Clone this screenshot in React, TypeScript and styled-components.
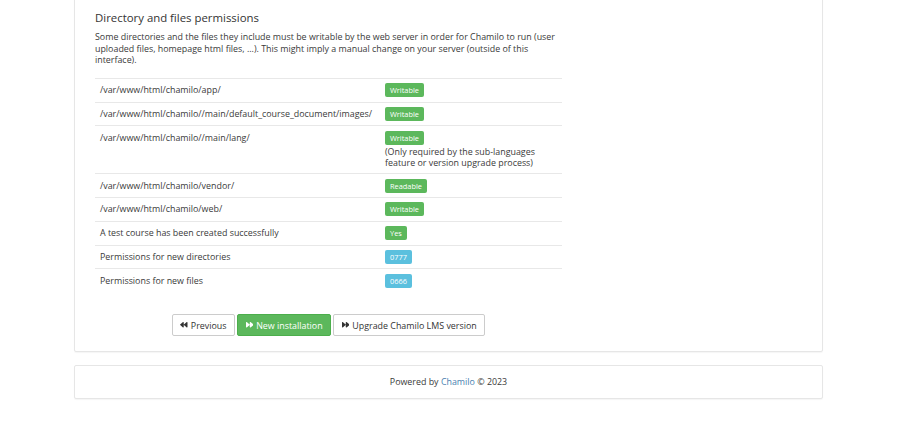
import styled, { createGlobalStyle } from 'styled-components';
import { FaBackward, FaForward } from 'react-icons/fa';

type Status = 'success' | 'info';

interface PermissionRow {
  label: string;
  value: string;
  status: Status;
  note?: string;
}

const rows: PermissionRow[] = [
  { label: '/var/www/html/chamilo/app/', value: 'Writable', status: 'success' },
  {
    label: '/var/www/html/chamilo//main/default_course_document/images/',
    value: 'Writable',
    status: 'success',
  },
  {
    label: '/var/www/html/chamilo//main/lang/',
    value: 'Writable',
    status: 'success',
    note: '(Only required by the sub-languages feature or version upgrade process)',
  },
  { label: '/var/www/html/chamilo/vendor/', value: 'Readable', status: 'success' },
  { label: '/var/www/html/chamilo/web/', value: 'Writable', status: 'success' },
  { label: 'A test course has been created successfully', value: 'Yes', status: 'success' },
  { label: 'Permissions for new directories', value: '0777', status: 'info' },
  { label: 'Permissions for new files', value: '0666', status: 'info' },
];

export default function App() {
  return (
    <>
      <GlobalStyle />
      <Page>
        <Panel>
          <Content>
            <Title>Directory and files permissions</Title>
            <Description>
              Some directories and the files they include must be writable by the web server in order for
              Chamilo to run (user uploaded files, homepage html files, ...). This might imply a manual
              change on your server (outside of this interface).
            </Description>
            <Table>
              <tbody>
                {rows.map((row) => (
                  <Row key={row.label}>
                    <LabelCell>{row.label}</LabelCell>
                    <ValueCell>
                      <Badge $status={row.status}>{row.value}</Badge>
                      {row.note && <Note>{row.note}</Note>}
                    </ValueCell>
                  </Row>
                ))}
              </tbody>
            </Table>
            <Actions>
              <Button>
                <FaBackward /> Previous
              </Button>
              <Button $primary>
                <FaForward /> New installation
              </Button>
              <Button>
                <FaForward /> Upgrade Chamilo LMS version
              </Button>
            </Actions>
          </Content>
        </Panel>
        <Footer>
          Powered by <FooterLink href="#">Chamilo</FooterLink> © 2023
        </Footer>
      </Page>
    </>
  );
}

const GlobalStyle = createGlobalStyle`
  html, body {
    margin: 0;
    padding: 0;
    background: #ffffff;
  }
  body {
    font-family: "Open Sans", "Liberation Sans", sans-serif;
    font-size: 8.9px;
    line-height: 11.6px;
    color: #3a3a3a;
  }
`;

const Page = styled.div`
  width: 749px;
  margin: 0 auto;
  padding-bottom: 28px;
`;

const Panel = styled.div`
  margin-top: -20px;
  padding: 30px 20px 15px;
  border: 1px solid #e6e6e6;
  border-radius: 2px;
  box-shadow: 0 1px 1px rgba(0, 0, 0, 0.04);
  box-sizing: border-box;
`;

const Content = styled.div`
  width: 467px;
`;

const Title = styled.h3`
  margin: 0 0 6px;
  font-size: 11.4px;
  line-height: 14px;
  font-weight: 400;
  color: #333333;
`;

const Description = styled.p`
  margin: 0 0 12px;
`;

const Table = styled.table`
  width: 100%;
  border-collapse: collapse;
`;

const Row = styled.tr`
  border-top: 1px solid #e8e8e8;
`;

const LabelCell = styled.td`
  width: 275px;
  padding: 4.4px 5px;
  vertical-align: top;
  line-height: 14px;
`;

const ValueCell = styled.td`
  padding: 4.4px 5px;
  vertical-align: top;
`;

const Badge = styled.span<{ $status: Status }>`
  display: inline-block;
  height: 14px;
  padding: 0 5px;
  border-radius: 2px;
  background: ${({ $status }) => ($status === 'info' ? '#5bc0de' : '#5cb85c')};
  color: #ffffff;
  font-size: 7.4px;
  font-weight: 500;
  line-height: 14px;
  vertical-align: top;
`;

const Note = styled.div`
  margin-top: 1px;
`;

const Actions = styled.div`
  display: flex;
  justify-content: center;
  gap: 2px;
  margin-top: 22px;
`;

const Button = styled.button<{ $primary?: boolean }>`
  display: inline-flex;
  align-items: center;
  gap: 3px;
  height: 22px;
  padding: 0 7.6px;
  border: 1px solid ${({ $primary }) => ($primary ? '#4cae4c' : '#cccccc')};
  border-radius: 2px;
  background: ${({ $primary }) => ($primary ? '#5cb85c' : '#ffffff')};
  color: ${({ $primary }) => ($primary ? '#ffffff' : '#333333')};
  font-family: "Open Sans", "Liberation Sans", sans-serif;
  font-size: 8.9px;

  svg {
    width: 7.5px;
    height: 7.5px;
  }
`;

const Footer = styled.div`
  margin-top: 13px;
  padding: 10px 0;
  border: 1px solid #e6e6e6;
  border-radius: 2px;
  box-shadow: 0 1px 1px rgba(0, 0, 0, 0.04);
  text-align: center;
  line-height: 12px;
`;

const FooterLink = styled.a`
  color: #4a7fb0;
  text-decoration: none;
`;
